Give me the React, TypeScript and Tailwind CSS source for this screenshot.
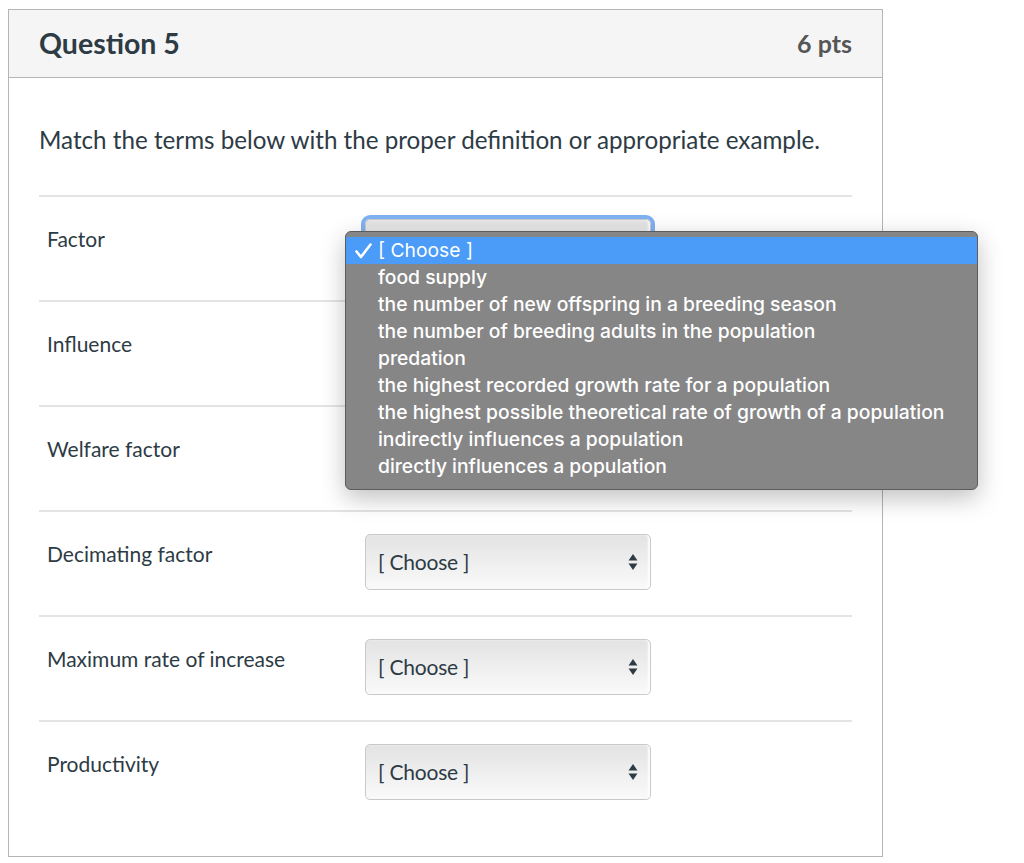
const TERMS = [
  "Factor",
  "Influence",
  "Welfare factor",
  "Decimating factor",
  "Maximum rate of increase",
  "Productivity",
];

const OPTIONS = [
  "food supply",
  "the number of new offspring in a breeding season",
  "the number of breeding adults in the population",
  "predation",
  "the highest recorded growth rate for a population",
  "the highest possible theoretical rate of growth of a population",
  "indirectly influences a population",
  "directly influences a population",
];

function Arrows() {
  return (
    <svg width="10" height="18" viewBox="0 0 10 18" className="shrink-0">
      <path d="M5 1 L9.5 7.5 L0.5 7.5 Z" fill="#2d3b45" />
      <path d="M5 17 L9.5 10.5 L0.5 10.5 Z" fill="#2d3b45" />
    </svg>
  );
}

function ChooseSelect({ focused }: { focused?: boolean }) {
  return (
    <div
      className={`relative flex h-[56px] w-[286px] items-center justify-between rounded-[5px] border border-[#c9c9c9] bg-gradient-to-b from-[#e3e3e3] to-[#fafafa] pl-[12px] pr-[12px] shadow-[inset_-2px_0_2px_rgba(255,255,255,0.9)] ${
        focused ? "ring-4 ring-[#7fb1f2]" : ""
      }`}
    >
      <span className="text-[21px] tracking-[-0.2px] text-[#2d3b45]">[ Choose ]</span>
      <Arrows />
    </div>
  );
}

function OpenMenu() {
  return (
    <div
      className="absolute left-[-20px] top-[34px] z-10 w-[633px] rounded-[6px] border border-[#5c5c5c] bg-[#868686] pb-[9px] pt-[5px] shadow-[0_8px_24px_rgba(0,0,0,0.25)]"
      style={{ fontFamily: "Inter, 'Noto Sans', sans-serif" }}
    >
      <div className="flex h-[27px] items-center bg-[#4b9bf8] text-[19.3px] text-white">
        <span className="flex w-[32px] justify-center pl-[2px]">
          <svg width="17" height="16" viewBox="0 0 17 16">
            <path
              d="M1.5 8.5 L6 14 L15.5 1.5"
              fill="none"
              stroke="white"
              strokeWidth="2.6"
              strokeLinecap="round"
              strokeLinejoin="round"
            />
          </svg>
        </span>
        <span>[ Choose ]</span>
      </div>
      {OPTIONS.map((o) => (
        <div
          key={o}
          className="flex h-[27px] items-center pl-[32px] text-[19.3px] font-medium text-white"
        >
          {o}
        </div>
      ))}
    </div>
  );
}

export default function App() {
  return (
    <div
      className="min-h-[863px] bg-white pl-[8px] pt-[9px] text-[#2d3b45]"
      style={{ fontFamily: "Lato, 'Open Sans', sans-serif" }}
    >
      <div className="w-[875px] border border-[#b5b5b5]">
        <div className="flex h-[68px] items-center justify-between border-b border-[#b5b5b5] bg-[#f5f5f5] px-[30px]">
          <h2 className="text-[28.5px] font-bold">Question 5</h2>
          <span className="text-[25px] font-bold text-[#565656]">6 pts</span>
        </div>

        <div className="px-[30px] pb-[31px]">
          <p className="pb-[40px] pt-[47px] text-[24.2px] leading-[30px]">
            Match the terms below with the proper definition or appropriate example.
          </p>

          {TERMS.map((term, i) => (
            <div
              key={term}
              className="flex h-[105px] border-t-2 border-[#e4e4e4]"
            >
              <div className="w-[326px] pl-[8px] pt-[29px] text-[21px] leading-[26px]">
                {term}
              </div>
              <div className="relative pt-[22px]">
                <ChooseSelect focused={i === 0} />
                {i === 0 && <OpenMenu />}
              </div>
            </div>
          ))}
        </div>
      </div>
    </div>
  );
}
